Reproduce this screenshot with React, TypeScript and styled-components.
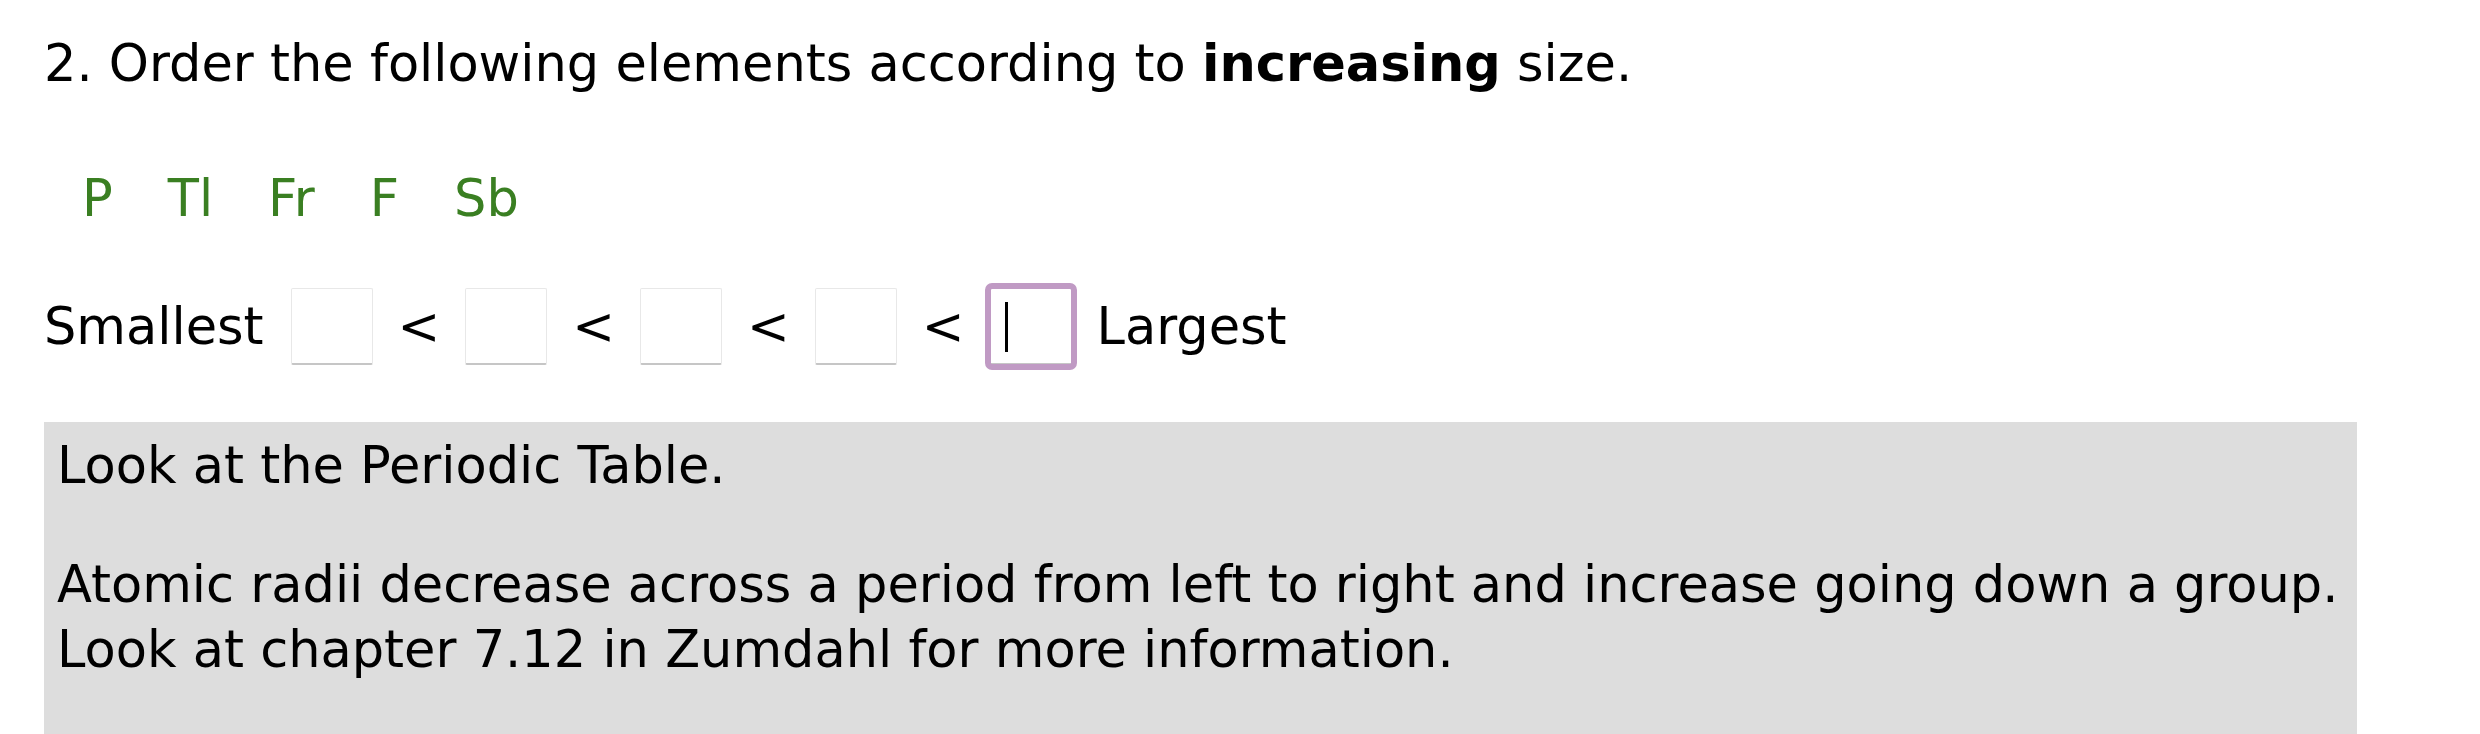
import React from "react";
import styled, { createGlobalStyle } from "styled-components";

const GlobalStyle = createGlobalStyle`
  html, body {
    margin: 0;
    padding: 0;
    background: #ffffff;
  }
  body {
    font-family: "DejaVu Sans", Verdana, sans-serif;
    color: #000000;
  }
`;

const Page = styled.div`
  padding: 34px 0 0 44px;
  width: 2313px;
`;

const Title = styled.h2`
  margin: 0;
  font-size: 51px;
  font-weight: normal;
  line-height: 60px;
`;

const Strong = styled.strong`
  font-weight: bold;
`;

const ElementList = styled.div`
  display: flex;
  gap: 55px;
  margin-top: 75px;
  padding-left: 38px;
  font-size: 51px;
  line-height: 60px;
  color: #3a7f22;
`;

const AnswerRow = styled.div`
  display: flex;
  align-items: center;
  gap: 25px;
  margin-top: 59px;
  font-size: 51px;
  line-height: 60px;
`;

const Label = styled.span<{ $first?: boolean }>`
  margin-right: ${(p) => (p.$first ? "2px" : "0")};
`;

const Slot = styled.div`
  position: relative;
`;

const Box = styled.input<{ $focused?: boolean }>`
  display: block;
  box-sizing: border-box;
  width: 82px;
  height: 77px;
  margin: 0;
  padding: 0;
  border: 1px solid #e8e8e8;
  border-bottom: 2px solid #c6c6c6;
  background: #ffffff;
  outline: ${(p) => (p.$focused ? "6px solid #c09ac4" : "none")};
  outline-offset: -1px;
  border-radius: 2px;
  font-size: 40px;
  font-family: inherit;
`;

const Caret = styled.span`
  position: absolute;
  left: 15px;
  top: 14px;
  width: 3px;
  height: 50px;
  background: #000000;
`;

const Hint = styled.div`
  margin-top: 57px;
  background: #dddddd;
  padding: 11px 9px 80px 13px;
  font-size: 51px;
  line-height: 65px;
`;

const HintPara = styled.p`
  margin: 0 0 54px 0;
  white-space: nowrap;
  &:last-child {
    margin-bottom: 0;
  }
`;

const elements = ["P", "Tl", "Fr", "F", "Sb"];

export default function App() {
  return (
    <>
      <GlobalStyle />
      <Page>
        <Title>
          2. Order the following elements according to <Strong>increasing</Strong> size.
        </Title>
        <ElementList>
          {elements.map((el) => (
            <span key={el}>{el}</span>
          ))}
        </ElementList>
        <AnswerRow>
          <Label $first>Smallest</Label>
          {[0, 1, 2, 3, 4].map((i) => (
            <React.Fragment key={i}>
              {i > 0 && <Label>&lt;</Label>}
              <Slot>
                <Box readOnly value="" $focused={i === 4} />
                {i === 4 && <Caret />}
              </Slot>
            </React.Fragment>
          ))}
          <Label>Largest</Label>
        </AnswerRow>
        <Hint>
          <HintPara>Look at the Periodic Table.</HintPara>
          <HintPara>
            Atomic radii decrease across a period from left to right and increase going down a group.
            <br />
            Look at chapter 7.12 in Zumdahl for more information.
          </HintPara>
        </Hint>
      </Page>
    </>
  );
}
